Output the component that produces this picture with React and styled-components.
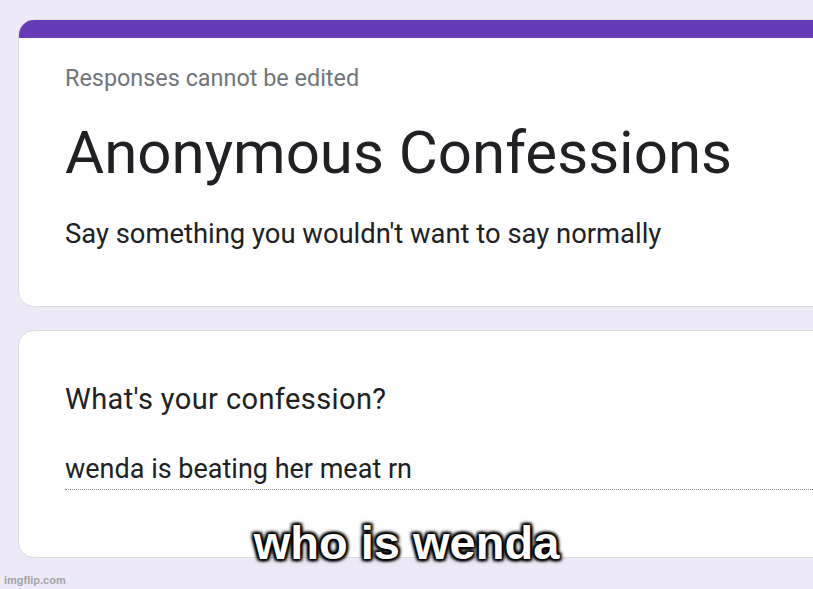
import styled, { createGlobalStyle } from "styled-components";

const Global = createGlobalStyle`
  html, body {
    margin: 0;
    padding: 0;
    background: #eee9f7;
    overflow: hidden;
  }
  body {
    font-family: Roboto, "Liberation Sans", Arial, sans-serif;
  }
`;

const Page = styled.div`
  position: relative;
  width: 813px;
  height: 589px;
  padding: 19px 0 0 18px;
  box-sizing: border-box;
  display: flex;
  flex-direction: column;
  gap: 23px;
  overflow: hidden;
`;

const Card = styled.div`
  width: 830px;
  flex-shrink: 0;
  background: #fff;
  border: 1px solid #dadce0;
  border-radius: 16px;
  box-sizing: border-box;
  padding: ${({ $pad }) => $pad};
  height: ${({ $h }) => $h}px;
  overflow: hidden;
`;

const TopBand = styled.div`
  height: 19px;
  margin: -1px -1px 0 -1px;
  background: #673ab7;
  border-radius: 16px 16px 0 0;
`;

const HeaderBody = styled.div`
  padding: 26px 0 0 46px;
`;

const Note = styled.div`
  font-size: 23.4px;
  line-height: 28px;
  color: #70757a;
`;

const Title = styled.h1`
  margin: 26px 0 0;
  font-weight: 400;
  font-size: 60px;
  line-height: 70px;
  color: #202124;
`;

const Desc = styled.div`
  margin-top: 30px;
  font-size: 27.4px;
  line-height: 32px;
  color: #202124;
`;

const Question = styled.div`
  font-size: 29px;
  line-height: 34px;
  letter-spacing: 0.4px;
  color: #202124;
`;

const Answer = styled.div`
  margin-top: 37px;
  font-size: 27px;
  line-height: 32px;
  color: #202124;
  padding-bottom: 4px;
  border-bottom: 1px dotted #8a8a8a;
`;

const Caption = styled.div`
  position: absolute;
  left: 0;
  right: 0;
  top: 517px;
  text-align: center;
  font-family: "Liberation Sans", Arial, sans-serif;
  font-weight: 700;
  font-size: 47px;
  line-height: 52px;
  color: #fff;
  text-shadow: 0 0 2px #000, 0 0 3px #000, 2px 2px 3px #000, -2px -2px 3px #000,
    2px -2px 3px #000, -2px 2px 3px #000, 0 0 6px rgba(0, 0, 0, 0.6);
`;

const Watermark = styled.div`
  position: absolute;
  left: 4px;
  bottom: 3px;
  font-family: "Liberation Sans", Arial, sans-serif;
  font-weight: 700;
  font-size: 11px;
  color: #a3a3a8;
`;

export default function App() {
  return (
    <>
      <Global />
      <Page>
        <Card $h={288} $pad="0">
          <TopBand />
          <HeaderBody>
            <Note>Responses cannot be edited</Note>
            <Title>Anonymous Confessions</Title>
            <Desc>Say something you wouldn't want to say normally</Desc>
          </HeaderBody>
        </Card>
        <Card $h={228} $pad="51px 0 0 46px">
          <Question>What's your confession?</Question>
          <Answer>wenda is beating her meat rn</Answer>
        </Card>
        <Caption>who is wenda</Caption>
        <Watermark>imgflip.com</Watermark>
      </Page>
    </>
  );
}
